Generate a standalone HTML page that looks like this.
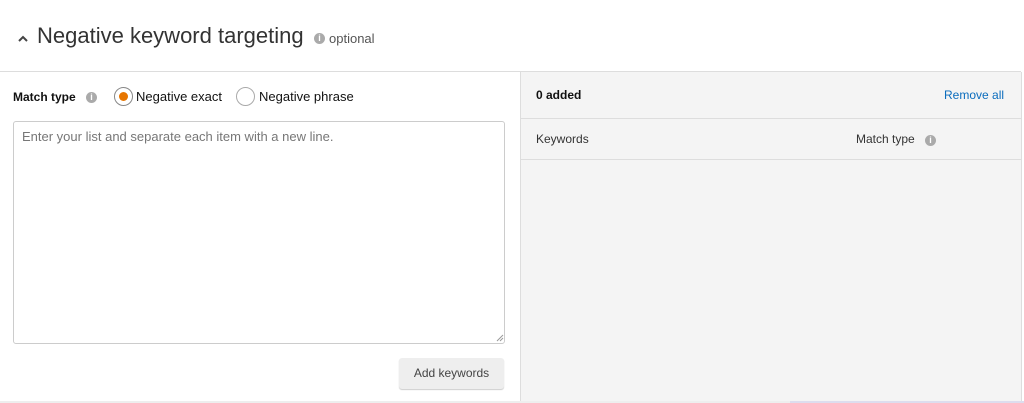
<!DOCTYPE html>
<html><head><style>
body{margin:0;width:1024px;height:403px;background:#fff;font-family:"Liberation Sans",Arial,sans-serif;position:relative;overflow:hidden;color:#111}
.a{position:absolute}
.info{display:inline-block;width:11px;height:11px;border-radius:50%;background:#aaa;color:#fff;font-size:9px;line-height:11px;text-align:center;font-weight:bold}
.radio{position:absolute;width:17px;height:17px;border:1px solid #aaa;border-radius:50%;background:#fff}
</style></head><body>
<svg class="a" style="left:17px;top:34px" width="12" height="9"><path d="M2 7 L6 3 L10 7" stroke="#444" stroke-width="2" fill="none"/></svg>
<div class="a" style="left:37px;top:23px;font-size:22px;color:#333">Negative keyword targeting</div>
<span class="a info" style="left:314px;top:33px">i</span>
<div class="a" style="left:329px;top:31px;font-size:13px;color:#555">optional</div>
<div class="a" style="left:0;top:71px;width:1021px;height:1px;background:#ddd"></div>
<div class="a" style="left:520px;top:72px;width:500px;height:331px;background:#f4f4f4;border-left:1px solid #ddd;border-right:1px solid #ddd"></div>
<div class="a" style="left:521px;top:118px;width:500px;height:1px;background:#ddd"></div>
<div class="a" style="left:521px;top:159px;width:500px;height:1px;background:#ddd"></div>
<div class="a" style="left:13px;top:90px;font-size:12px;font-weight:bold">Match type</div>
<span class="a info" style="left:86px;top:92px">i</span>
<div class="radio" style="left:114px;top:87px;border-color:#888"></div>
<div class="a" style="left:119px;top:92px;width:9px;height:9px;border-radius:50%;background:#e77600"></div>
<div class="a" style="left:136px;top:89px;font-size:13px">Negative exact</div>
<div class="radio" style="left:236px;top:87px"></div>
<div class="a" style="left:259px;top:89px;font-size:13px">Negative phrase</div>
<div class="a" style="left:13px;top:121px;width:490px;height:221px;border:1px solid #ccc;border-radius:3px;background:#fff"></div>
<div class="a" style="left:22px;top:129px;font-size:13px;color:#777">Enter your list and separate each item with a new line.</div>
<svg class="a" style="left:496px;top:334px" width="8" height="8"><path d="M1 7L7 1M4 7L7 4" stroke="#999"/></svg>
<div class="a" style="left:399px;top:358px;width:105px;height:31px;background:#eee;border-radius:3px;box-shadow:0 1px 1px #ccc;font-size:12px;color:#444;text-align:center;line-height:31px">Add keywords</div>
<div class="a" style="left:536px;top:88px;font-size:12px;font-weight:bold">0 added</div>
<div class="a" style="left:944px;top:88px;font-size:12px;color:#0a6cbd">Remove all</div>
<div class="a" style="left:536px;top:132px;font-size:12px;color:#333">Keywords</div>
<div class="a" style="left:856px;top:132px;font-size:12px;color:#333">Match type</div>
<span class="a info" style="left:925px;top:135px">i</span>
<div class="a" style="left:0;top:401px;width:1024px;height:2px;background:#eee"></div>
<div class="a" style="left:790px;top:401px;width:234px;height:2px;background:#dde"></div>
</body></html>
